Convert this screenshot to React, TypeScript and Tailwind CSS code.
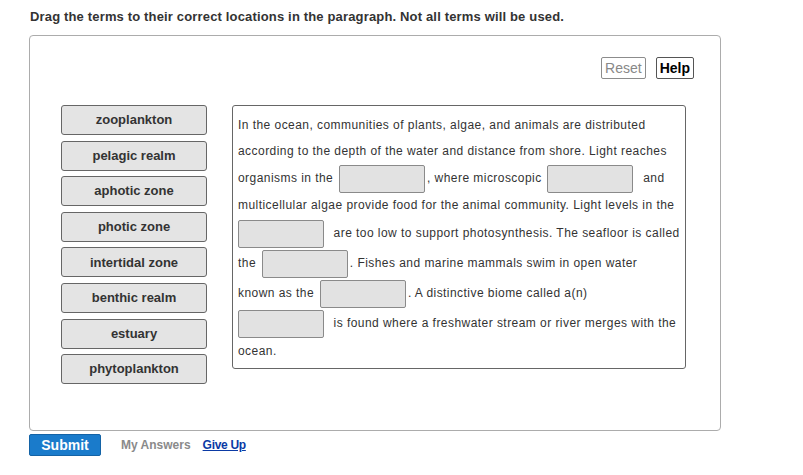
import React from 'react';

const terms = [
  'zooplankton',
  'pelagic realm',
  'aphotic zone',
  'photic zone',
  'intertidal zone',
  'benthic realm',
  'estuary',
  'phytoplankton',
];

function Blank() {
  return (
    <span className="inline-block w-[86px] h-[28px] align-middle bg-[#e2e2e2] border border-[#8a8a8a] rounded-[2px] mx-[2px]" />
  );
}

export default function App() {
  return (
    <div className="w-[803px] h-[475px] bg-white text-[#333] font-['Liberation_Sans',Arial,sans-serif] pl-[29px] pt-[8px]">
      {/* Instructions */}
      <p className="text-[13px] font-bold leading-[18px] pl-[1px] tracking-[0.16px]">
        Drag the terms to their correct locations in the paragraph. Not all terms will be used.
      </p>

      {/* Main panel */}
      <div className="mt-[9px] w-[692px] h-[396px] border border-[#acacac] rounded-[4px] pt-[21px] px-[31px]">
        <div className="flex justify-end gap-[10px] mr-[-5px]">
          <button className="h-[22px] px-[3px] border border-[#8c8c8c] rounded-[2px] bg-white text-[14px] leading-[20px] text-[#888]">
            Reset
          </button>
          <button className="h-[22px] px-[3px] border border-[#555] rounded-[2px] bg-white text-[14px] leading-[20px] font-bold text-black">
            Help
          </button>
        </div>

        <div className="flex mt-[26px]">
          {/* Terms */}
          <div className="flex flex-col gap-[5.6px] w-[146px]">
            {terms.map((t) => (
              <div
                key={t}
                className="h-[30px] flex items-center justify-center bg-[#e4e4e4] border border-[#666] rounded-[3px] text-[13px] font-bold text-[#333]"
              >
                {t}
              </div>
            ))}
          </div>

          {/* Paragraph */}
          <div className="ml-[25px] w-[454px] h-[264px] border border-[#666] rounded-[3px] pl-[5px] pt-[6px] text-[12px] tracking-[0.45px] text-[#333]">
            <div className="leading-[26px] h-[26px] whitespace-nowrap">
              In the ocean, communities of plants, algae, and animals are distributed
            </div>
            <div className="leading-[26px] h-[26px] whitespace-nowrap">
              according to the depth of the water and distance from shore. Light reaches
            </div>
            <div className="leading-[28px] h-[28px] whitespace-nowrap">
              organisms in the <Blank />, where microscopic <Blank /> <span className="ml-[4px]">and</span>
            </div>
            <div className="leading-[26px] h-[26px] whitespace-nowrap">
              multicellular algae provide food for the animal community. Light levels in the
            </div>
            <div className="leading-[30px] h-[30px] whitespace-nowrap -ml-[2px]">
              <Blank /> &nbsp;are too low to support photosynthesis. The seafloor is called
            </div>
            <div className="leading-[30px] h-[30px] whitespace-nowrap">
              the <Blank />. Fishes and marine mammals swim in open water
            </div>
            <div className="leading-[30px] h-[30px] whitespace-nowrap">
              known as the <Blank />. A distinctive biome called a(n)
            </div>
            <div className="leading-[30px] h-[30px] whitespace-nowrap -ml-[2px]">
              <Blank /> &nbsp;is found where a freshwater stream or river merges with the
            </div>
            <div className="leading-[26px] h-[26px] whitespace-nowrap">ocean.</div>
          </div>
        </div>
      </div>

      {/* Footer actions */}
      <div className="flex items-center mt-[3px] h-[22px]">
        <button className="w-[72px] h-[22px] bg-[#1a7bcb] border border-[#1463a6] rounded-[2px] text-white text-[14px] font-bold leading-[20px]">
          Submit
        </button>
        <span className="ml-[20px] text-[12px] font-bold text-[#8a8a8a]">My Answers</span>
        <a href="#" className="ml-[12px] text-[12px] font-bold text-[#0b3aa5] underline tracking-[-0.3px]">
          Give Up
        </a>
      </div>
    </div>
  );
}
